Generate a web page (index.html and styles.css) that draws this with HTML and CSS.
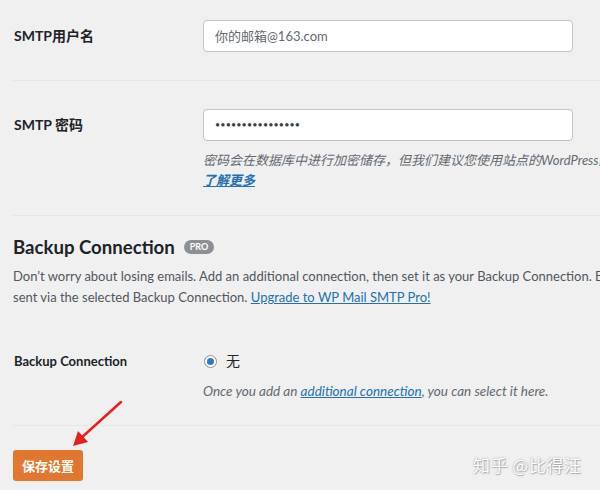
FILE: index.html
```html
<!DOCTYPE html>
<html lang="zh">
<head>
<meta charset="utf-8">
<title>WP Mail SMTP</title>
<link rel="stylesheet" href="styles.css">
</head>
<body>
<div class="page">
  <div class="row row-user">
    <div class="label">SMTP用户名</div>
    <div class="field">
      <div class="input placeholder">你的邮箱@163.com</div>
    </div>
  </div>
  <div class="row row-pass">
    <div class="label">SMTP 密码</div>
    <div class="field">
      <div class="input dots">••••••••••••••••</div>
      <p class="desc">密码会在数据库中进行加密储存，但我们建议您使用站点的WordPress配置文件来设置密码以获得更高的安全性。</p>
      <p class="desc"><a class="more" href="#">了解更多</a></p>
    </div>
  </div>
  <div class="section">
    <h2 class="title">Backup Connection <span class="pro">PRO</span></h2>
    <p class="intro">Don’t worry about losing emails. Add an additional connection, then set it as your Backup Connection. Emails that fail to send with the Primary Connection will be<br>sent via the selected Backup Connection. <a href="#">Upgrade to WP Mail SMTP Pro!</a></p>
  </div>
  <div class="row row-backup">
    <div class="label">Backup Connection</div>
    <div class="field">
      <label class="radio"><span class="dot"></span>无</label>
      <p class="note">Once you add an <a href="#">additional connection</a>, you can select it here.</p>
    </div>
  </div>
  <div class="actions">
    <button class="save">保存设置</button>
  </div>
</div>
<svg class="arrow" width="70" height="60" viewBox="0 0 70 60">
  <line x1="58" y1="3" x2="17" y2="40" stroke="#e8201a" stroke-width="2.5" stroke-linecap="round"/>
  <polygon points="10,47 15,32 25,43" fill="#e8201a"/>
</svg>
<div class="watermark">知乎 @比得汪</div>
</body>
</html>
```

FILE: styles.css
```css
html, body {
  margin: 0;
  padding: 0;
}
body {
  width: 600px;
  height: 490px;
  overflow: hidden;
  position: relative;
  background: #f0f0f1;
  font-family: "Lato", "Noto Sans CJK SC", sans-serif;
  font-size: 13px;
  color: #1d2327;
}
.page {
  margin-left: 13px;
  width: 900px;
}
.row {
  display: grid;
  grid-template-columns: 190px 370px;
  border-bottom: 1px solid #e6e6e7;
}
.label {
  font-weight: 700;
  font-size: 13px;
  padding-left: 1px;
  line-height: 32px;
}
.row-user .label,
.row-pass .label {
  font-size: 14px;
}
.input {
  box-sizing: border-box;
  height: 32px;
  width: 370px;
  background: #fff;
  border: 1px solid #c3c4c7;
  border-radius: 4px;
  padding: 0 11px;
  line-height: 30px;
  font-size: 13px;
}
.placeholder {
  color: #646970;
}
.dots {
  color: #3c434a;
  font-size: 9px;
  letter-spacing: 0.1px;
}
.row-user {
  padding: 20px 0 28px;
}
.row-pass {
  padding: 28px 0 25px;
}
.desc {
  margin: 0;
  font-style: italic;
  color: #646970;
  line-height: 20px;
  white-space: nowrap;
  font-size: 13px;
}
.row-pass .input + .desc {
  margin-top: 9px;
}
.more {
  color: #2271b1;
  font-weight: 700;
}
.section {
  padding-top: 19px;
}
.title {
  margin: 0;
  font-size: 18.6px;
  font-weight: 700;
  line-height: 24px;
  display: flex;
  align-items: center;
  gap: 9px;
  color: #1d2327;
}
.pro {
  background: #8c8f94;
  color: #fff;
  font-size: 9px;
  font-weight: 700;
  border-radius: 8px;
  padding: 0 6px;
  line-height: 14px;
}
.intro {
  margin: 7px 0 0;
  color: #50575e;
  font-size: 13px;
  line-height: 21px;
  white-space: nowrap;
}
a {
  color: #2271b1;
}
.row-backup {
  padding: 44px 0 25px;
}
.row-backup .label {
  line-height: 18px;
}
.radio {
  display: flex;
  align-items: center;
  gap: 9px;
  font-size: 14px;
  line-height: 18px;
  padding-left: 1px;
}
.dot {
  box-sizing: border-box;
  width: 13px;
  height: 13px;
  border-radius: 50%;
  border: 1px solid #8c8f94;
  background: #fff;
  position: relative;
}
.dot::after {
  content: "";
  position: absolute;
  left: 2px;
  top: 2px;
  width: 7px;
  height: 7px;
  border-radius: 50%;
  background: #2f7bc0;
}
.note {
  margin: 12px 0 0;
  font-style: italic;
  color: #646970;
  font-size: 13.5px;
  line-height: 18px;
  white-space: nowrap;
}
.actions {
  padding-top: 24px;
}
.save {
  background: #e27730;
  color: #fff;
  border: none;
  border-radius: 3px;
  font-family: "Noto Sans CJK SC", sans-serif;
  font-weight: 700;
  font-size: 13px;
  width: 70px;
  height: 31px;
  padding: 0;
}
.arrow {
  position: absolute;
  left: 63px;
  top: 399px;
}
.watermark {
  position: absolute;
  left: 473px;
  top: 452px;
  font-family: "Noto Sans CJK SC", sans-serif;
  font-size: 17px;
  color: #fff;
  text-shadow: 0 0 2px rgba(0,0,0,0.35), 1px 1px 1px rgba(0,0,0,0.2);
  letter-spacing: 0.5px;
}
```
